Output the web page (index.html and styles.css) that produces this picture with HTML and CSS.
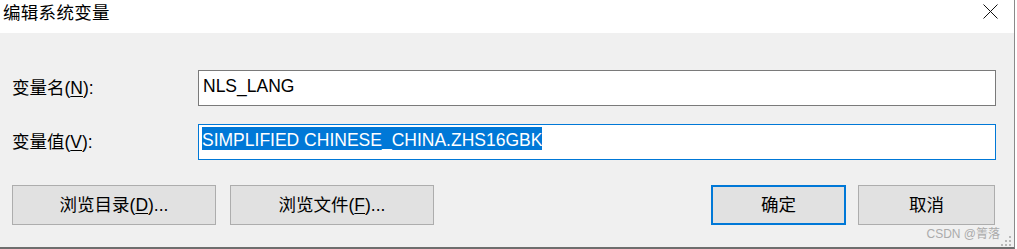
FILE: index.html
```html
<!DOCTYPE html>
<html lang="zh-CN">
<head>
<meta charset="utf-8">
<title>编辑系统变量</title>
<link rel="stylesheet" href="styles.css">
</head>
<body>
<div class="window">
  <div class="titlebar">
    <span class="title">编辑系统变量</span>
    <svg class="close" width="15" height="15" viewBox="0 0 15 15" aria-hidden="true">
      <path d="M0.5 0.5 L14.5 14.5 M14.5 0.5 L0.5 14.5" stroke="#111" stroke-width="1" fill="none"/>
    </svg>
  </div>
  <div class="content">
    <div class="row">
      <label class="label">变量名(<u>N</u>):</label>
      <div class="field"><span class="value">NLS_LANG</span></div>
    </div>
    <div class="row row2">
      <label class="label">变量值(<u>V</u>):</label>
      <div class="field focused"><span class="selected">SIMPLIFIED CHINESE_CHINA.ZHS16GBK</span></div>
    </div>
    <div class="buttons">
      <button class="btn wide">浏览目录(<u>D</u>)...</button>
      <button class="btn wide second">浏览文件(<u>F</u>)...</button>
      <div class="spacer"></div>
      <button class="btn ok">确定</button>
      <button class="btn cancel">取消</button>
    </div>
    <div class="watermark">CSDN @箐落</div>
    <svg class="grip" width="12" height="12" viewBox="0 0 12 12" aria-hidden="true">
      <rect x="9" y="1" width="2" height="2" fill="#b8b8b8"/>
      <rect x="5" y="5" width="2" height="2" fill="#b8b8b8"/>
      <rect x="9" y="5" width="2" height="2" fill="#b8b8b8"/>
      <rect x="1" y="9" width="2" height="2" fill="#b8b8b8"/>
      <rect x="5" y="9" width="2" height="2" fill="#b8b8b8"/>
      <rect x="9" y="9" width="2" height="2" fill="#b8b8b8"/>
    </svg>
  </div>
</div>
</body>
</html>
```

FILE: styles.css
```css
html, body {
  margin: 0;
  padding: 0;
  background: #ffffff;
}

body {
  font-family: "Liberation Sans", "Noto Sans CJK SC", sans-serif;
  font-size: 17.5px;
  color: #000;
  width: 1017px;
  height: 249px;
  overflow: hidden;
}

.window {
  width: 1014px;
  height: 247px;
  border-right: 1px solid #8a8a8a;
  border-bottom: 2px solid #6e6e6e;
  display: flex;
  flex-direction: column;
}

.titlebar {
  height: 33px;
  background: #ffffff;
  display: flex;
  align-items: flex-start;
  padding-left: 3px;
  box-sizing: border-box;
}

.title {
  font-size: 17.5px;
  line-height: 20px;
  margin-top: 3px;
  letter-spacing: 0.3px;
}

.close {
  margin-left: auto;
  margin-right: 16px;
  margin-top: 4px;
}

.content {
  position: relative;
  flex: 1;
  background: #f0f0f0;
  padding: 37px 0 0 12px;
  box-sizing: border-box;
}

.row {
  display: flex;
  align-items: center;
  height: 36px;
}

.row2 {
  margin-top: 18px;
}

.label {
  width: 186px;
  flex: none;
  line-height: 22px;
}

.label u, .btn u {
  text-decoration-thickness: 1px;
  text-underline-offset: 2px;
}

.field {
  width: 798px;
  height: 36px;
  box-sizing: border-box;
  border: 1px solid #7a7a7a;
  background: #ffffff;
  padding: 3px 0 0 4px;
  line-height: 24px;
  white-space: nowrap;
}

.field.focused {
  border-color: #0078d7;
  padding: 2px 0 0 3px;
}

.selected {
  display: inline-block;
  background: #0078d7;
  color: #ffffff;
  height: 23px;
  box-sizing: border-box;
  padding-top: 4px;
  line-height: 19px;
  vertical-align: top;
}

.buttons {
  display: flex;
  align-items: flex-start;
  margin-top: 25px;
}

.btn {
  font-family: "Liberation Sans", "Noto Sans CJK SC", sans-serif;
  font-size: 17.5px;
  color: #000;
  height: 40px;
  box-sizing: border-box;
  background: #e1e1e1;
  border: 1px solid #adadad;
  padding: 0;
  line-height: 22px;
  flex: none;
}

.wide {
  width: 204px;
}

.second {
  margin-left: 14px;
}

.spacer {
  flex: 1;
}

.ok {
  width: 135px;
  border: 2px solid #0078d7;
}

.cancel {
  width: 137px;
  margin-left: 12px;
  margin-right: 19px;
}

.watermark {
  position: absolute;
  right: 14px;
  bottom: 6px;
  font-family: "Liberation Sans", "Noto Sans CJK SC", sans-serif;
  font-size: 12px;
  line-height: 14px;
  color: #ababab;
}

.grip {
  position: absolute;
  right: 2px;
  bottom: 0;
}
```
